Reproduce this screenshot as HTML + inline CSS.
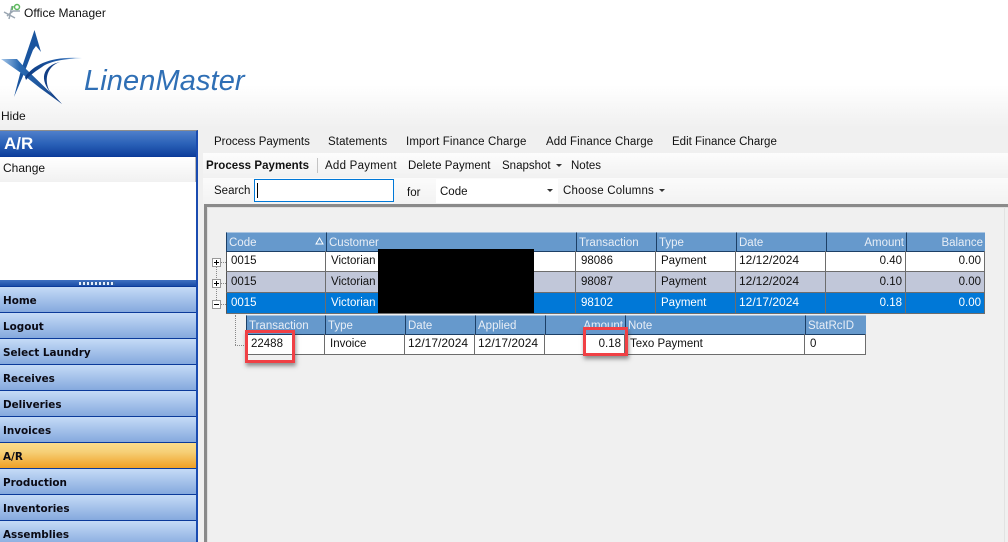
<!DOCTYPE html>
<html><head><meta charset="utf-8"><style>
html,body{margin:0;padding:0;width:1008px;height:542px;overflow:hidden}
body{position:relative;background:#f0f0f0;font-family:"Liberation Sans",sans-serif;font-size:12px;color:#111}
div{position:absolute;box-sizing:border-box}
#w{left:0;top:0;width:1008px;height:542px;overflow:hidden}
.t{position:absolute;white-space:nowrap;font-size:11.5px;line-height:14px}
.nav{position:absolute;left:0;width:196px;height:26px;background:linear-gradient(#c5dbf7,#85a9de);border-bottom:1px solid #0b3a9a;font:bold 10.4px/28px "DejaVu Sans",sans-serif;padding-left:3px;color:#0a0a14;white-space:nowrap}
.h{position:absolute;background:#6699cc;color:#e8eef6;font-size:11.5px;line-height:20px;padding:0 2px;border-left:1px solid #1c3f66;border-top:1px solid #a9c4e0;border-bottom:1px solid #1c3f66;white-space:nowrap;height:20px}
.c{position:absolute;font-size:11.5px;line-height:16px;padding:2px 5px 0;white-space:nowrap;border-right:1px solid #6d6d6d;border-bottom:1px solid #6d6d6d}
.d{font-size:12px;padding-top:1px}
.r{text-align:right;padding-right:3px}
.red{position:absolute;border:3px solid #f04045;box-shadow:1px 3px 4px rgba(60,60,60,.55)}
.exp{position:absolute;left:212px;width:9px;height:9px;border:1px solid #999;background:#fff}
.exp:before{content:"";position:absolute;left:1px;top:3px;width:5px;height:1px;background:#000}
.exp.p:after{content:"";position:absolute;left:3px;top:1px;width:1px;height:5px;background:#000}
</style></head><body><div id="w">
<div style="left:0;top:0;width:1008px;height:130px;background:linear-gradient(#fff 0,#fff 85px,#f0f0f0 128px)"></div>

<svg style="position:absolute;left:2px;top:2px" width="22" height="20" viewBox="0 0 22 20"><path d="M10 4 L7 17 M2 10 L13 16 M5 14 L11 9 L18 9" stroke="#9aa6b2" stroke-width="1.500" fill="none"/><circle cx="15" cy="5" r="2.500" fill="none" stroke="#5cb85c" stroke-width="1.500"/><path d="M10 8l1-4" stroke="#5cb85c" stroke-width="1.500"/></svg>
<span class="t" style="left:24px;top:6px;font-size:12px">Office Manager</span>

<svg style="position:absolute;left:0;top:26px" width="90" height="82" viewBox="0 0 90 82">
<defs><linearGradient id="g" x1="0" y1="0" x2="1" y2="0"><stop offset="0" stop-color="#0d3a80"/><stop offset=".6" stop-color="#1f5ba8"/><stop offset="1" stop-color="#9cc0e6"/></linearGradient><linearGradient id="l" x1="0" y1="0" x2="1" y2="0"><stop offset="0" stop-color="#a8c8ea"/><stop offset=".3" stop-color="#2a6ab2"/><stop offset="1" stop-color="#123f86"/></linearGradient></defs>
<path d="M34.500 4 L41 26 L36 20 L33 24 L23 50 L14 71 L21 44 Z" fill="#1a559f"/>
<path d="M1 33 L17 33 L26 43 L62 78 L40 62 L21 47 Z" fill="url(#l)"/>
<path d="M25 51 C34 38 52 30 82 32 C64 33 50 35 42 41 C36 45 30 49 26 54 Z" fill="url(#g)"/>
<path d="M60 36 C50 39 43 50 49 64 L62 78 C48 67 38 52 48 42 C51 39 55 37 60 36 Z" fill="#123f86"/>
</svg>
<span class="t" style="left:84px;top:64px;font-size:29px;line-height:34px;font-style:italic;color:#2f6fb5;letter-spacing:.1px">LinenMaster</span>

<span class="t" style="left:1px;top:109px;font-size:12px">Hide</span>

<!-- sidebar -->
<div style="left:0;top:130px;width:198px;height:412px;background:#fff;border-right:2px solid #1a4bb0;border-top:1px solid #8d8d8d"></div>
<div style="left:0;top:131px;width:196px;height:26px;background:linear-gradient(#4f7fcb,#2b62b8 50%,#0f3f9c);border-bottom:1px solid #0b3a9a;color:#fff;font:bold 17px/25px 'Liberation Sans',sans-serif;padding-left:4px">A/R</div>
<div style="left:0;top:157px;width:196px;height:25px;background:linear-gradient(#fff,#f1f1f1)"></div>
<span class="t" style="left:3px;top:161px;font-size:12px">Change</span>
<div style="left:195px;top:157px;width:1px;height:25px;background:#b8b8b8"></div>
<div style="left:0;top:280px;width:196px;height:7px;background:linear-gradient(#3f70c0,#1b4ea8);border-bottom:1px solid #0b3a9a"></div>
<div style="left:79px;top:282px;width:36px;height:3px;background:repeating-linear-gradient(90deg,#e6eefc 0,#e6eefc 2px,#34619f 2px,#34619f 4px)"></div>
<div class="nav" style="top:287px">Home</div>
<div class="nav" style="top:313px">Logout</div>
<div class="nav" style="top:339px">Select Laundry</div>
<div class="nav" style="top:365px">Receives</div>
<div class="nav" style="top:391px">Deliveries</div>
<div class="nav" style="top:417px">Invoices</div>
<div class="nav" style="top:443px;background:linear-gradient(#fbdc8a,#f6d078 35%,#f0a024)">A/R</div>
<div class="nav" style="top:469px">Production</div>
<div class="nav" style="top:495px">Inventories</div>
<div class="nav" style="top:521px">Assemblies</div>

<!-- toolbars -->
<span class="t" style="left:214px;top:135px">Process Payments</span>
<span class="t" style="left:328px;top:135px;letter-spacing:.1px">Statements</span>
<span class="t" style="left:406px;top:135px;letter-spacing:.14px">Import Finance Charge</span>
<span class="t" style="left:546px;top:135px;letter-spacing:.1px">Add Finance Charge</span>
<span class="t" style="left:672px;top:135px">Edit Finance Charge</span>

<div style="left:203px;top:153px;width:805px;height:25px;background:linear-gradient(#fdfdfd,#f1f1f1)"></div>
<span class="t" style="left:206px;top:159px;font-weight:bold;letter-spacing:.05px">Process Payments</span>
<div style="left:317px;top:158px;width:1px;height:15px;background:#c4c4c4"></div>
<span class="t" style="left:325px;top:159px;letter-spacing:.25px">Add Payment</span>
<span class="t" style="left:408px;top:159px;letter-spacing:.05px">Delete Payment</span>
<span class="t" style="left:502px;top:159px">Snapshot</span>
<div style="left:556px;top:164px;border:3px solid transparent;border-top:3px solid #333;width:0;height:0"></div>
<span class="t" style="left:571px;top:159px">Notes</span>

<div style="left:203px;top:178px;width:805px;height:27px;background:linear-gradient(#fbfbfb,#f2f2f2)"></div>
<span class="t" style="left:214px;top:184px">Search</span>
<div style="left:254px;top:179px;width:140px;height:23px;background:#fff;border:1px solid #0078d7"></div>
<div style="left:257px;top:183px;width:1px;height:15px;background:#000"></div>
<span class="t" style="left:407px;top:186px">for</span>
<div style="left:436px;top:179px;width:122px;height:24px;background:#fff"></div>
<span class="t" style="left:440px;top:185px">Code</span>
<div style="left:547px;top:189px;border:3px solid transparent;border-top:3px solid #333;width:0;height:0"></div>
<span class="t" style="left:563px;top:184px;letter-spacing:.2px">Choose Columns</span>
<div style="left:659px;top:189px;border:3px solid transparent;border-top:3px solid #333;width:0;height:0"></div>

<!-- content -->
<div style="left:204px;top:204px;width:804px;height:338px;background:#f0f0f0;border-left:3px solid #8a8a8a;border-top:3px solid #8a8a8a;box-shadow:inset 1px 1px 0 #e0e0e0"></div>
<div style="left:1004px;top:207px;width:1px;height:335px;background:#e2e2e2"></div>

<!-- main grid rows -->
<div style="left:226px;top:251px;width:759px;height:21px;background:#fff"></div>
<div style="left:226px;top:272px;width:759px;height:21px;background:#c1c7d9"></div>
<div style="left:226px;top:293px;width:759px;height:21px;background:#0078d7"></div>
<div style="left:226px;top:251px;width:1px;height:63px;background:#555"></div>

<div class="h" style="left:226px;top:232px;width:100px">Code</div>
<svg style="position:absolute;left:315px;top:237px" width="9" height="8"><path d="M4.500 1L8 7H1Z" fill="none" stroke="#fff"/></svg>
<div class="h" style="left:326px;top:232px;width:250px">Customer</div>
<div class="h" style="left:576px;top:232px;width:80px">Transaction</div>
<div class="h" style="left:656px;top:232px;width:80px">Type</div>
<div class="h" style="left:736px;top:232px;width:90px">Date</div>
<div class="h" style="left:826px;top:232px;width:80px;text-align:right">Amount</div>
<div class="h" style="left:906px;top:232px;width:79px;text-align:right">Balance</div>

<div class="c" style="left:226px;top:251px;width:100px;height:21px">0015</div>
<div class="c" style="left:326px;top:251px;width:250px;height:21px">Victorian</div>
<div class="c" style="left:576px;top:251px;width:80px;height:21px">98086</div>
<div class="c" style="left:656px;top:251px;width:80px;height:21px">Payment</div>
<div class="c d" style="left:736px;top:251px;width:90px;height:21px;padding-left:3px">12/12/2024</div>
<div class="c r" style="left:826px;top:251px;width:80px;height:21px">0.40</div>
<div class="c r" style="left:906px;top:251px;width:79px;height:21px">0.00</div>

<div class="c" style="left:226px;top:272px;width:100px;height:21px">0015</div>
<div class="c" style="left:326px;top:272px;width:250px;height:21px">Victorian</div>
<div class="c" style="left:576px;top:272px;width:80px;height:21px">98087</div>
<div class="c" style="left:656px;top:272px;width:80px;height:21px">Payment</div>
<div class="c d" style="left:736px;top:272px;width:90px;height:21px;padding-left:3px">12/12/2024</div>
<div class="c r" style="left:826px;top:272px;width:80px;height:21px">0.10</div>
<div class="c r" style="left:906px;top:272px;width:79px;height:21px">0.00</div>

<div class="c" style="left:226px;top:293px;width:100px;height:21px;color:#fff">0015</div>
<div class="c" style="left:326px;top:293px;width:250px;height:21px;color:#fff">Victorian</div>
<div class="c" style="left:576px;top:293px;width:80px;height:21px;color:#fff">98102</div>
<div class="c" style="left:656px;top:293px;width:80px;height:21px;color:#fff">Payment</div>
<div class="c d" style="left:736px;top:293px;width:90px;height:21px;color:#fff;padding-left:3px">12/17/2024</div>
<div class="c r" style="left:826px;top:293px;width:80px;height:21px;color:#fff">0.18</div>
<div class="c r" style="left:906px;top:293px;width:79px;height:21px;color:#fff">0.00</div>

<div style="left:378px;top:249px;width:156px;height:64px;background:#000"></div>

<!-- tree -->
<div style="left:216px;top:266px;width:0;height:40px;border-left:1px dotted #888"></div>
<div style="left:221px;top:262px;width:5px;border-top:1px dotted #888"></div>
<div style="left:221px;top:283px;width:5px;border-top:1px dotted #888"></div>
<div style="left:221px;top:304px;width:5px;border-top:1px dotted #888"></div>
<div class="exp p" style="top:258px"></div>
<div class="exp p" style="top:279px"></div>
<div class="exp" style="top:300px"></div>
<div style="left:235px;top:315px;width:0;height:30px;border-left:1px dotted #888"></div>
<div style="left:235px;top:345px;width:11px;border-top:1px dotted #888"></div>

<!-- child grid -->
<div style="left:246px;top:334px;width:620px;height:21px;background:#fff"></div>
<div class="h" style="left:246px;top:315px;width:79px">Transaction</div>
<div class="h" style="left:325px;top:315px;width:80px">Type</div>
<div class="h" style="left:405px;top:315px;width:70px">Date</div>
<div class="h" style="left:475px;top:315px;width:70px">Applied</div>
<div class="h" style="left:545px;top:315px;width:80px;text-align:right">Amount</div>
<div class="h" style="left:625px;top:315px;width:180px">Note</div>
<div class="h" style="left:805px;top:315px;width:61px">StatRcID</div>

<div class="c" style="left:246px;top:334px;width:79px;height:21px">22488</div>
<div class="c" style="left:325px;top:334px;width:80px;height:21px">Invoice</div>
<div class="c d" style="left:405px;top:334px;width:70px;height:21px;padding-left:3px">12/17/2024</div>
<div class="c d" style="left:475px;top:334px;width:70px;height:21px;padding-left:3px">12/17/2024</div>
<div class="c r" style="left:545px;top:334px;width:80px;height:21px">0.18</div>
<div class="c" style="left:625px;top:334px;width:180px;height:21px">Texo Payment</div>
<div class="c" style="left:805px;top:334px;width:61px;height:21px">0</div>

<div class="red" style="left:245px;top:330px;width:50px;height:33px"></div>
<div class="red" style="left:583px;top:327px;width:45px;height:29px"></div>
</div></body></html>
